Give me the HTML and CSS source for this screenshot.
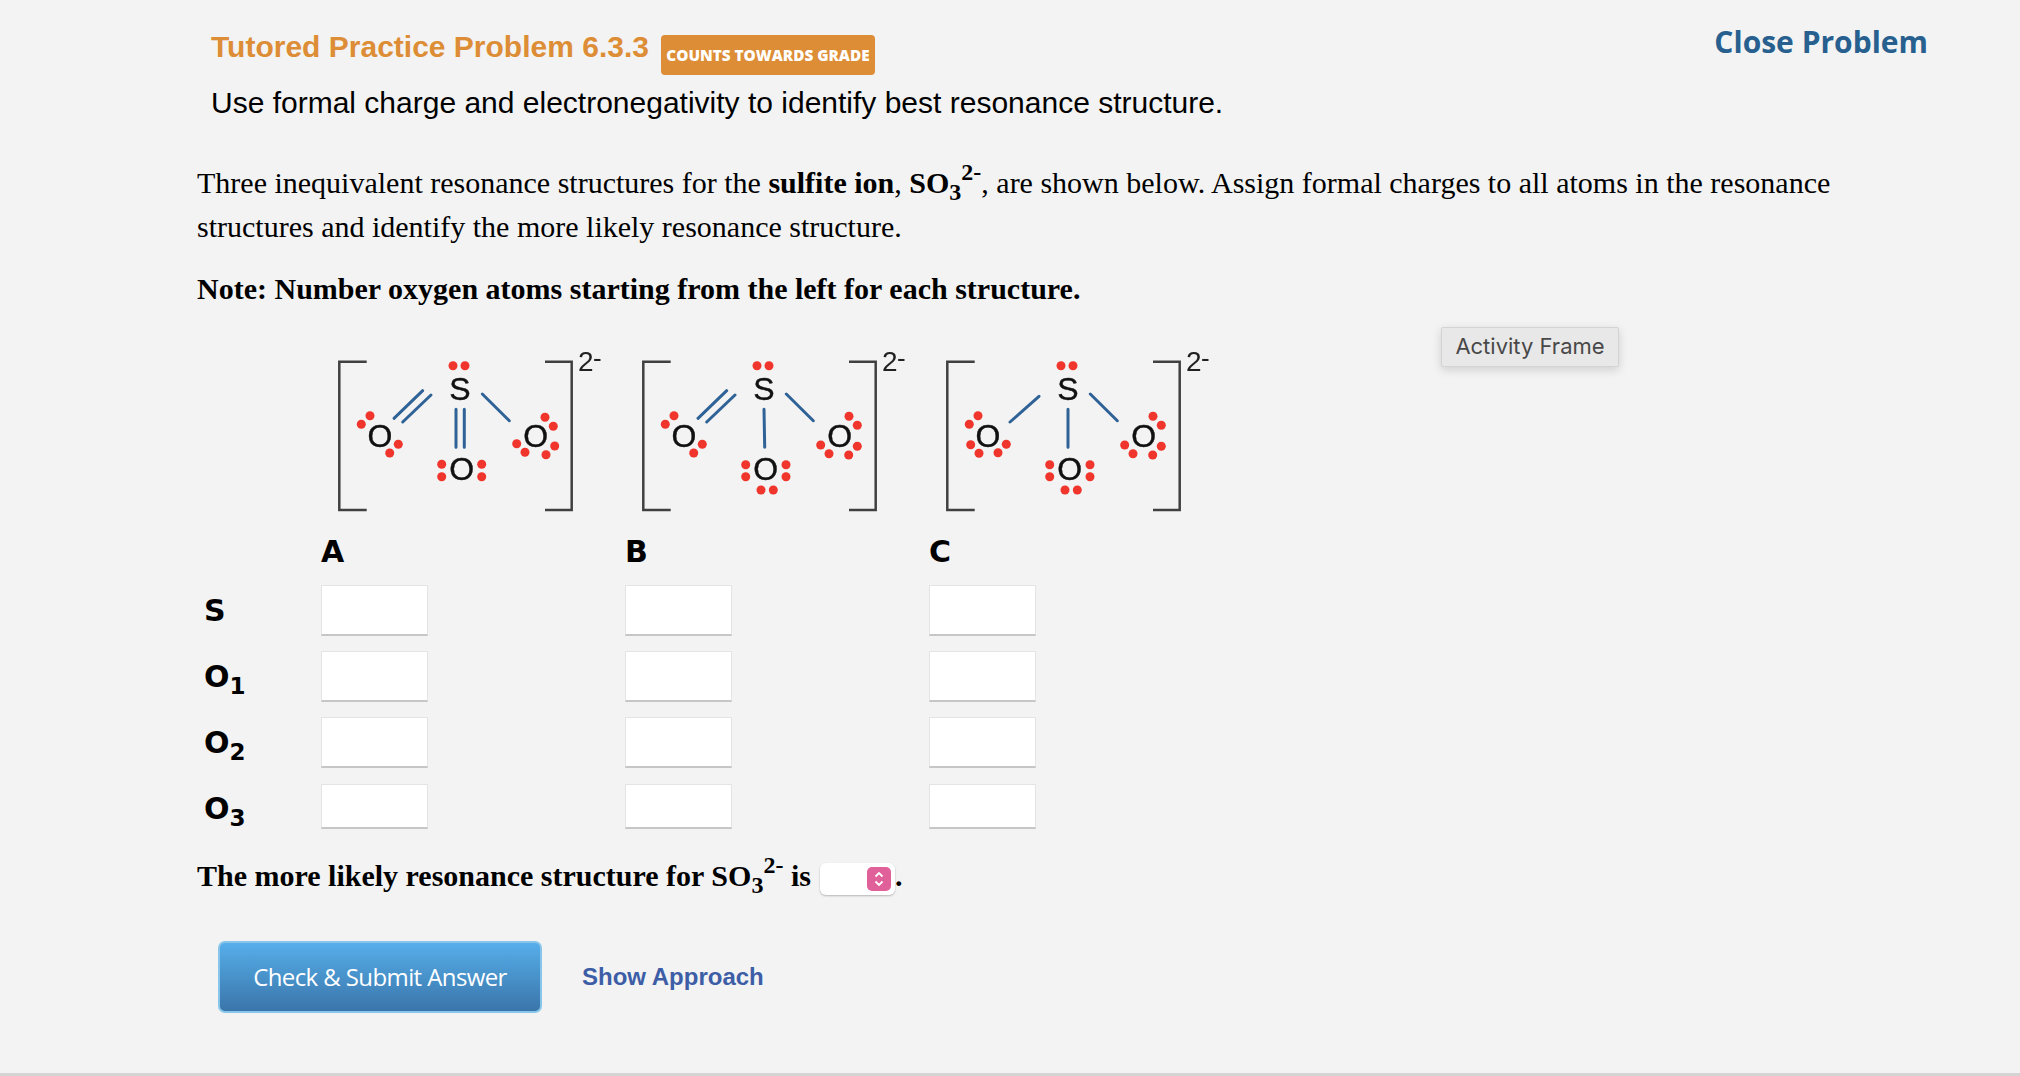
FILE: index.html
```html
<!DOCTYPE html>
<html lang="en">
<head>
  <meta charset="UTF-8" />
  <title>Tutored Practice Problem 6.3.3</title>
  <link rel="stylesheet" href="styles.css">
</head>
<body>

  <div class="page">
    <div class="header">
      <div class="title-row">
        <h1>Tutored Practice Problem 6.3.3</h1>
        <span class="badge">COUNTS TOWARDS GRADE</span>
      </div>
      <a class="close-link">Close Problem</a>
    </div>
    <div class="subtitle">Use formal charge and electronegativity to identify best resonance structure.</div>

    <div class="question">
      <p class="intro">Three inequivalent resonance structures for the <b>sulfite ion</b>, <b>SO<sub>3</sub><sup>2-</sup></b>, are shown below. Assign formal charges to all atoms in the resonance structures and identify the more likely resonance structure.</p>
      <p class="note">Note: Number oxygen atoms starting from the left for each structure.</p>

      <div class="molecules">
        <svg class="molecule" viewBox="0 0 304 190">
          <path class="bracket" d="M46.7 21.7H19.3V170H46.7M225 21.7H251.7V170H225"/>
          <text class="charge" x="258" y="31">2</text><text class="charge-minus" x="273" y="27">-</text>
          <path class="bond" d="M74 78.3L102.7 50.7M82.7 82L111 55M162.3 54L189.3 80.7M136 69.3V107.3M144.3 69.3V107.3"/>
          <text class="atom" x="140" y="59.5">S</text>
          <text class="atom" x="60" y="106.7">O</text>
          <text class="atom" x="141.7" y="140">O</text>
          <text class="atom" x="215.7" y="106.7">O</text>
          <g class="dots">
            <circle cx="133" cy="25.7" r="4.5"/><circle cx="145" cy="25.7" r="4.5"/>
            <circle cx="50" cy="75.7" r="4.5"/><circle cx="41.3" cy="84.3" r="4.5"/><circle cx="78.3" cy="104.3" r="4.5"/><circle cx="69.7" cy="113" r="4.5"/>
            <circle cx="121.7" cy="124.3" r="4.5"/><circle cx="121.7" cy="136.7" r="4.5"/><circle cx="161.7" cy="124.3" r="4.5"/><circle cx="161.7" cy="136.7" r="4.5"/>
            <circle cx="225" cy="77.3" r="4.5"/><circle cx="233.3" cy="86.3" r="4.5"/><circle cx="234.7" cy="106" r="4.5"/><circle cx="226" cy="114.7" r="4.5"/><circle cx="196.7" cy="103.7" r="4.5"/><circle cx="205" cy="112.3" r="4.5"/>
          </g>
        </svg>
        <svg class="molecule" viewBox="0 0 304 190">
          <path class="bracket" d="M46.7 21.7H19.3V170H46.7M225 21.7H251.7V170H225"/>
          <text class="charge" x="258" y="31">2</text><text class="charge-minus" x="273" y="27">-</text>
          <path class="bond" d="M74 78.3L102.7 50.7M82.7 82L111 55M162.3 54L189.3 80.7M140 69.3L140.7 107.3"/>
          <text class="atom" x="140" y="59.5">S</text>
          <text class="atom" x="60" y="106.7">O</text>
          <text class="atom" x="141.7" y="140">O</text>
          <text class="atom" x="215.7" y="106.7">O</text>
          <g class="dots">
            <circle cx="133" cy="25.7" r="4.5"/><circle cx="145" cy="25.7" r="4.5"/>
            <circle cx="50" cy="75.7" r="4.5"/><circle cx="41.3" cy="84.3" r="4.5"/><circle cx="78.3" cy="104.3" r="4.5"/><circle cx="69.7" cy="113" r="4.5"/>
            <circle cx="121.7" cy="124.7" r="4.5"/><circle cx="121.7" cy="136.7" r="4.5"/><circle cx="162" cy="124.7" r="4.5"/><circle cx="162" cy="136.7" r="4.5"/><circle cx="137" cy="150" r="4.5"/><circle cx="149.3" cy="150" r="4.5"/>
            <circle cx="225" cy="76.3" r="4.5"/><circle cx="233.3" cy="85.3" r="4.5"/><circle cx="233.3" cy="106.3" r="4.5"/><circle cx="224.7" cy="115" r="4.5"/><circle cx="196.7" cy="105" r="4.5"/><circle cx="205" cy="113.7" r="4.5"/>
          </g>
        </svg>
        <svg class="molecule" viewBox="0 0 304 190">
          <path class="bracket" d="M46.7 21.7H19.3V170H46.7M225 21.7H251.7V170H225"/>
          <text class="charge" x="258" y="31">2</text><text class="charge-minus" x="273" y="27">-</text>
          <path class="bond" d="M82 82L111 56.3M162.3 54L189.3 80.7M140 69.3V107.3"/>
          <text class="atom" x="140" y="59.5">S</text>
          <text class="atom" x="60" y="106.7">O</text>
          <text class="atom" x="141.7" y="140">O</text>
          <text class="atom" x="215.7" y="106.7">O</text>
          <g class="dots">
            <circle cx="133" cy="25.7" r="4.5"/><circle cx="145" cy="25.7" r="4.5"/>
            <circle cx="50" cy="75.7" r="4.5"/><circle cx="41.3" cy="84.3" r="4.5"/><circle cx="42.7" cy="104.7" r="4.5"/><circle cx="51" cy="113.3" r="4.5"/><circle cx="78.3" cy="104.3" r="4.5"/><circle cx="70" cy="112.7" r="4.5"/>
            <circle cx="121.7" cy="124.7" r="4.5"/><circle cx="121.7" cy="136.7" r="4.5"/><circle cx="162" cy="124.7" r="4.5"/><circle cx="162" cy="136.7" r="4.5"/><circle cx="137" cy="150" r="4.5"/><circle cx="149.3" cy="150" r="4.5"/>
            <circle cx="225" cy="76.3" r="4.5"/><circle cx="233.3" cy="85.3" r="4.5"/><circle cx="233.3" cy="106.3" r="4.5"/><circle cx="224.7" cy="115" r="4.5"/><circle cx="196.7" cy="105" r="4.5"/><circle cx="205" cy="113.7" r="4.5"/>
          </g>
        </svg>
      </div>

      <div class="charge-table">
        <div></div>
        <div class="col-head">A</div>
        <div class="col-head">B</div>
        <div class="col-head">C</div>

        <div class="row-head">S</div>
        <div><input type="text" class="charge-input"></div>
        <div><input type="text" class="charge-input"></div>
        <div><input type="text" class="charge-input"></div>

        <div class="row-head">O<sub>1</sub></div>
        <div><input type="text" class="charge-input"></div>
        <div><input type="text" class="charge-input"></div>
        <div><input type="text" class="charge-input"></div>

        <div class="row-head">O<sub>2</sub></div>
        <div><input type="text" class="charge-input"></div>
        <div><input type="text" class="charge-input"></div>
        <div><input type="text" class="charge-input"></div>

        <div class="row-head last-row">O<sub>3</sub></div>
        <div><input type="text" class="charge-input last"></div>
        <div><input type="text" class="charge-input last"></div>
        <div><input type="text" class="charge-input last"></div>
      </div>

      <div class="answer-line">
        <span>The more likely resonance structure for SO<sub>3</sub><sup>2-</sup> is</span>
        <span class="select-box">
          <span class="select-arrows">
            <svg width="12" height="18" viewBox="0 0 12 18"><path d="M2.5 6.5L6 3L9.5 6.5M2.5 11.5L6 15L9.5 11.5"/></svg>
          </span>
        </span>
        <span>.</span>
      </div>
    </div>

    <div class="actions">
      <button class="submit-btn">Check &amp; Submit Answer</button>
      <a class="approach-link">Show Approach</a>
    </div>
  </div>

  <div class="frame-tip">Activity Frame</div>
  <div class="bottom-line"></div>

</body>
</html>
```

FILE: styles.css
```css
* {
  box-sizing: border-box;
}

html,
body {
  height: 100%;
}

body {
  margin: 0;
  background-color: #f3f3f3;
  color: #000;
  display: flex;
  flex-direction: column;
  overflow: hidden;
}

.page {
  flex: 1;
  padding: 0 92px 0 197px;
}

.header {
  display: flex;
  justify-content: space-between;
  align-items: flex-start;
  padding: 24px 0 0 14px;
}

.title-row {
  display: flex;
  align-items: flex-start;
  padding-top: 2px;
}

h1 {
  margin: 3px 0 0;
  font-family: "Liberation Sans", sans-serif;
  font-size: 30px;
  line-height: 36px;
  font-weight: bold;
  color: #dd8d35;
}

.badge {
  margin: 9px 0 0 12px;
  width: 214px;
  height: 40px;
  background-color: #dd8d35;
  border-radius: 4px;
  color: #fff;
  font-family: "Open Sans", sans-serif;
  font-size: 15.3px;
  font-weight: 800;
  line-height: 40px;
  text-align: center;
  white-space: nowrap;
}

.close-link {
  font-family: "Open Sans", sans-serif;
  font-size: 30px;
  line-height: 36px;
  font-weight: 700;
  color: #27608f;
}

.subtitle {
  margin: 10px 0 0 14px;
  font-family: "Liberation Sans", sans-serif;
  font-size: 30px;
  line-height: 36px;
}

.question {
  font-family: "Liberation Serif", serif;
  font-size: 30px;
}

.intro {
  margin: 40px 0 0;
  line-height: 44px;
}

.note {
  margin: 18px 0 0;
  font-weight: bold;
  line-height: 44px;
}

sub,
sup {
  font-size: 24px;
  line-height: 0;
  font-weight: bold;
}

sub {
  vertical-align: -7px;
}

sup {
  vertical-align: 13px;
}

.molecules {
  display: flex;
  margin: 29px 0 4px 123px;
}

.molecule {
  display: block;
  width: 304px;
  height: 190px;
  flex: none;
  filter: blur(0.4px);
}

.bracket {
  fill: none;
  stroke: #404040;
  stroke-width: 2.5;
}

.bond {
  fill: none;
  stroke: #2f6296;
  stroke-width: 3;
  stroke-linecap: round;
}

.atom {
  font-family: "Liberation Sans", sans-serif;
  font-size: 32px;
  fill: #111;
  stroke: #111;
  stroke-width: 0.4;
  text-anchor: middle;
}

.charge {
  font-family: "Liberation Sans", sans-serif;
  font-size: 28px;
  fill: #222;
}

.charge-minus {
  font-family: "Liberation Sans", sans-serif;
  font-size: 26px;
  fill: #222;
}

.dots {
  fill: #f0352c;
}

.charge-table {
  display: grid;
  grid-template-columns: 124px repeat(3, 304px);
  row-gap: 15px;
  align-items: center;
  font-family: "DejaVu Sans", sans-serif;
  font-size: 30px;
  font-weight: bold;
}

.col-head {
  height: 36px;
  line-height: 36px;
  margin-bottom: 0;
}

.row-head {
  padding-left: 7px;
  line-height: 40px;
}

.row-head.last-row {
  padding-top: 6px;
}

.row-head sub {
  font-size: 23px;
  vertical-align: -7px;
}

.charge-input {
  display: block;
  width: 107px;
  height: 51px;
  background-color: #fff;
  border: 1px solid #e4e4e4;
  border-bottom: 2px solid #c6c6c6;
  padding: 0;
}

.charge-input.last {
  height: 45px;
}

.answer-line {
  display: flex;
  align-items: center;
  margin-top: 25px;
  font-weight: bold;
  line-height: 44px;
  white-space: pre;
}

.select-box {
  display: flex;
  justify-content: flex-end;
  align-items: center;
  width: 75px;
  height: 32px;
  margin: 5px 0 0 9px;
  padding-right: 4px;
  background-color: #fff;
  border-radius: 6px;
  box-shadow: 0 1px 2px rgba(0,0,0,0.25);
}

.select-arrows {
  display: flex;
  align-items: center;
  justify-content: center;
  width: 24px;
  height: 24px;
  background-color: #e0609a;
  border-radius: 5px;
}

.select-arrows path {
  fill: none;
  stroke: #fff;
  stroke-width: 1.8;
}

.actions {
  display: flex;
  align-items: center;
  gap: 40px;
  margin: 43px 0 0 21px;
}

.submit-btn {
  width: 324px;
  height: 72px;
  padding: 0 0 2px;
  background: linear-gradient(#56aeea, #3a75aa);
  border: 2px solid #88c5ea;
  border-radius: 7px;
  color: #fff;
  font-family: "Open Sans", sans-serif;
  font-size: 24px;
  letter-spacing: -0.6px;
}

.approach-link {
  font-family: "Liberation Sans", sans-serif;
  font-size: 24px;
  font-weight: bold;
  color: #3d5ea6;
}

/* floats over the problem text */
.frame-tip {
  position: absolute;
  left: 1441px;
  top: 327px;
  width: 178px;
  height: 40px;
  background-color: #e8e8e8;
  border: 1px solid #d4d4d4;
  border-radius: 2px;
  box-shadow: 0 3px 10px rgba(0,0,0,0.15);
  color: #484848;
  font-family: "Inter", sans-serif;
  font-size: 22px;
  line-height: 37px;
  text-align: center;
}

.bottom-line {
  flex: none;
  height: 3px;
  background-color: #d4d4d4;
}
```
